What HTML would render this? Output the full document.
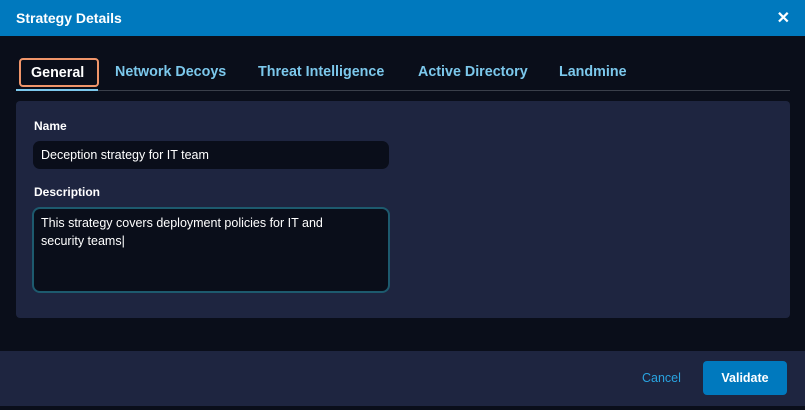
<!DOCTYPE html>
<html><head><style>
*{margin:0;padding:0;box-sizing:border-box}
body{width:805px;height:410px;background:#0a0e1a;font-family:"Liberation Sans",sans-serif;position:relative;overflow:hidden}
.hdr{position:absolute;left:0;top:0;width:805px;height:36px;background:#0079be;color:#fff;font-weight:bold;font-size:14px;padding:10px 0 0 16px}
.x{position:absolute;right:15px;top:8px;font-size:16px;font-weight:bold;color:#fff}
.tab{position:absolute;top:64px;font-size:14.3px;font-weight:bold;color:#7cc8ec}
.gen{position:absolute;left:19px;top:58px;width:80px;height:29px;border:2px solid #f0956a;border-radius:4px;color:#fff;font-size:14.3px;font-weight:bold;padding:5px 0 0 10px}
.line{position:absolute;left:16px;top:90px;width:774px;height:1px;background:#3a3f4a}
.act{position:absolute;left:16px;top:89px;width:82px;height:2px;background:#7cc8ec}
.panel{position:absolute;left:16px;top:101px;width:774px;height:217px;background:#1e2540;border-radius:4px}
.lbl{position:absolute;left:34px;font-size:12px;font-weight:bold;color:#fff}
.inp{position:absolute;left:33px;top:141px;width:356px;height:28px;background:#0a0e1a;border-radius:7px;color:#fff;font-size:12.5px;padding:7px 0 0 8px}
.ta{position:absolute;left:32px;top:207px;width:358px;height:86px;background:#0a0e1a;border:2px solid #1d5a6e;border-radius:8px;color:#fff;font-size:12.5px;line-height:18px;padding:5px 0 0 7px}
.foot{position:absolute;left:0;top:351px;width:805px;height:55px;background:#1e2540}
.cancel{position:absolute;left:642px;top:371px;color:#29a3e0;font-size:12.5px}
.btn{position:absolute;left:703px;top:361px;width:84px;height:34px;background:#0079be;border-radius:4px;color:#fff;font-weight:bold;font-size:12.5px;text-align:center;line-height:34px}
</style></head><body>
<div class="hdr">Strategy Details</div><div class="x">✕</div>
<div class="gen">General</div>
<div class="tab" style="left:115px">Network Decoys</div>
<div class="tab" style="left:258px">Threat Intelligence</div>
<div class="tab" style="left:418px">Active Directory</div>
<div class="tab" style="left:559px">Landmine</div>
<div class="line"></div><div class="act"></div>
<div class="panel"></div>
<div class="lbl" style="top:119px">Name</div>
<div class="inp">Deception strategy for IT team</div>
<div class="lbl" style="top:185px">Description</div>
<div class="ta">This strategy covers deployment policies for IT and<br>security teams|</div>
<div class="foot"></div>
<div class="cancel">Cancel</div>
<div class="btn">Validate</div>
</body></html>
